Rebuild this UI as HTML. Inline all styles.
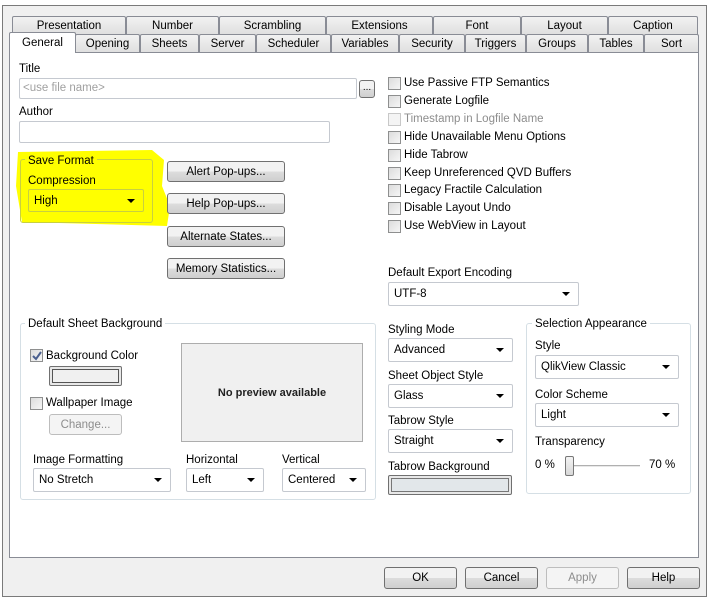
<!DOCTYPE html>
<html><head><style>
*{box-sizing:border-box;margin:0;padding:0}
body{width:718px;height:606px;position:relative;background:#fff;font-family:"Liberation Sans",sans-serif;font-size:11.5px;color:#000;overflow:hidden;line-height:16px}
.a{position:absolute;white-space:nowrap}
.win{position:absolute;left:2px;top:5px;width:705px;height:592px;background:#f0f0f0;border:1px solid #7a7a7a}
.tab{position:absolute;height:19px;border:1px solid #898c95;border-bottom:none;background:linear-gradient(#f2f2f2,#dedede);text-align:center;line-height:19px;border-radius:2px 2px 0 0}
.page{position:absolute;left:9px;top:52px;width:690px;height:506px;background:#fff;border:1px solid #898c95}
.inp{position:absolute;border:1px solid #c5c9d0;background:#fff;border-radius:2px}
.dd{position:absolute;border:1px solid #c5c9d0;background:#fff;border-radius:2px;padding-left:5px;line-height:23px}
.dd:after{content:"";position:absolute;right:8px;top:9px;border-left:4px solid transparent;border-right:4px solid transparent;border-top:4px solid #000}
.btn{position:absolute;border:1px solid #707070;border-radius:3px;background:linear-gradient(#f2f2f2 50%,#dddddd 50%,#cfcfcf);text-align:center;line-height:20px}
.cb{position:absolute;width:13px;height:13px;border:1px solid #8e8f8f;background:linear-gradient(135deg,#dcdcdc,#f6f6f6)}
.grp{position:absolute;border:1px solid #d5dfe5;border-radius:3px}
.lg{position:absolute;background:#fff;padding:0 3px}
</style></head><body>
<div class="win"></div>
<div class="tab" style="left:12px;top:16px;width:114px">Presentation</div>
<div class="tab" style="left:126px;top:16px;width:93px">Number</div>
<div class="tab" style="left:219px;top:16px;width:107px">Scrambling</div>
<div class="tab" style="left:326px;top:16px;width:107px">Extensions</div>
<div class="tab" style="left:433px;top:16px;width:88px">Font</div>
<div class="tab" style="left:521px;top:16px;width:87px">Layout</div>
<div class="tab" style="left:608px;top:16px;width:90px">Caption</div>
<div class="tab" style="left:75px;top:34px;width:65px">Opening</div>
<div class="tab" style="left:140px;top:34px;width:59px">Sheets</div>
<div class="tab" style="left:199px;top:34px;width:57px">Server</div>
<div class="tab" style="left:256px;top:34px;width:75px">Scheduler</div>
<div class="tab" style="left:331px;top:34px;width:68px">Variables</div>
<div class="tab" style="left:399px;top:34px;width:66px">Security</div>
<div class="tab" style="left:465px;top:34px;width:61px">Triggers</div>
<div class="tab" style="left:526px;top:34px;width:62px">Groups</div>
<div class="tab" style="left:588px;top:34px;width:56px">Tables</div>
<div class="tab" style="left:644px;top:34px;width:55px">Sort</div>
<div class="page"></div>
<div class="tab" style="left:9px;top:32px;width:67px;height:21px;background:#fff;line-height:20px;z-index:2">General</div>

<div class="a" style="left:19px;top:61px">Title</div>
<div class="inp" style="left:19px;top:78px;width:338px;height:21px;color:#a0a0a0;padding-left:3px;line-height:19px">&lt;use file name&gt;</div>
<div class="btn" style="left:359px;top:80px;width:16px;height:18px;line-height:14px;font-size:10px">...</div>
<div class="a" style="left:19px;top:104px">Author</div>
<div class="inp" style="left:19px;top:121px;width:311px;height:22px"></div>

<svg class="a" style="left:12px;top:146px" width="160" height="84"><path d="M6 6 L140 4 L152 14 L150 40 L158 60 L155 80 L10 76 L4 40 Z" fill="#ffff00"/></svg>
<div class="grp" style="left:20px;top:159px;width:133px;height:64px;border-color:#c8d040"></div>
<div class="a" style="left:25px;top:153px;background:#ffff00;padding:0 3px">Save Format</div>
<div class="a" style="left:28px;top:173px">Compression</div>
<div class="dd" style="left:28px;top:189px;width:116px;height:23px;background:#ffff00;border-color:#c8d040;line-height:22px">High</div>

<div class="btn" style="left:167px;top:161px;width:118px;height:21px">Alert Pop-ups...</div>
<div class="btn" style="left:167px;top:193px;width:118px;height:21px">Help Pop-ups...</div>
<div class="btn" style="left:167px;top:226px;width:118px;height:21px">Alternate States...</div>
<div class="btn" style="left:167px;top:258px;width:118px;height:21px">Memory Statistics...</div>

<div class="cb" style="left:388px;top:77px"></div><div class="a" style="left:404px;top:75px">Use Passive FTP Semantics</div>
<div class="cb" style="left:388px;top:95px"></div><div class="a" style="left:404px;top:93px">Generate Logfile</div>
<div class="cb" style="left:388px;top:113px;border-color:#c8c8c8;background:#f4f4f4"></div><div class="a" style="left:404px;top:111px;color:#8d8d8d">Timestamp in Logfile Name</div>
<div class="cb" style="left:388px;top:131px"></div><div class="a" style="left:404px;top:129px">Hide Unavailable Menu Options</div>
<div class="cb" style="left:388px;top:149px"></div><div class="a" style="left:404px;top:147px">Hide Tabrow</div>
<div class="cb" style="left:388px;top:167px"></div><div class="a" style="left:404px;top:165px">Keep Unreferenced QVD Buffers</div>
<div class="cb" style="left:388px;top:184px"></div><div class="a" style="left:404px;top:182px">Legacy Fractile Calculation</div>
<div class="cb" style="left:388px;top:202px"></div><div class="a" style="left:404px;top:200px">Disable Layout Undo</div>
<div class="cb" style="left:388px;top:220px"></div><div class="a" style="left:404px;top:218px">Use WebView in Layout</div>

<div class="a" style="left:388px;top:265px">Default Export Encoding</div>
<div class="dd" style="left:388px;top:282px;width:191px;height:24px">UTF-8</div>

<div class="grp" style="left:20px;top:323px;width:356px;height:177px"></div>
<div class="lg" style="left:25px;top:316px">Default Sheet Background</div>
<div class="cb" style="left:30px;top:349px"></div>
<svg class="a" style="left:31px;top:350px" width="12" height="12"><path d="M2 6 L5 9 L10 2" stroke="#4a5f8f" stroke-width="2" fill="none"/></svg>
<div class="a" style="left:46px;top:348px">Background Color</div>
<div class="a" style="left:49px;top:366px;width:73px;height:20px;border:1px solid #707070;border-radius:2px;background:#e8e8e8;padding:2px"><div style="width:100%;height:100%;border:1px solid #555;background:#f0f0f0"></div></div>
<div class="cb" style="left:30px;top:397px"></div>
<div class="a" style="left:46px;top:395px">Wallpaper Image</div>
<div class="btn" style="left:49px;top:414px;width:73px;height:21px;color:#8d8d8d;border-color:#bdbdbd;background:#f4f4f4">Change...</div>
<div class="a" style="left:181px;top:343px;width:182px;height:99px;background:#f0f0f0;border:1px solid #adadad;text-align:center;line-height:99px;font-weight:bold;font-size:11px;color:#222">No preview available</div>
<div class="a" style="left:33px;top:452px">Image Formatting</div>
<div class="a" style="left:186px;top:452px">Horizontal</div>
<div class="a" style="left:282px;top:452px">Vertical</div>
<div class="dd" style="left:33px;top:468px;width:138px;height:24px">No Stretch</div>
<div class="dd" style="left:186px;top:468px;width:78px;height:24px">Left</div>
<div class="dd" style="left:282px;top:468px;width:84px;height:24px">Centered</div>

<div class="a" style="left:388px;top:322px">Styling Mode</div>
<div class="dd" style="left:388px;top:338px;width:125px;height:24px">Advanced</div>
<div class="a" style="left:388px;top:368px">Sheet Object Style</div>
<div class="dd" style="left:388px;top:384px;width:125px;height:24px">Glass</div>
<div class="a" style="left:388px;top:413px">Tabrow Style</div>
<div class="dd" style="left:388px;top:429px;width:125px;height:24px">Straight</div>
<div class="a" style="left:388px;top:459px">Tabrow Background</div>
<div class="a" style="left:388px;top:475px;width:124px;height:20px;border:1px solid #707070;border-radius:2px;background:#e8e8e8;padding:2px"><div style="width:100%;height:100%;border:1px solid #777;background:#e2e7ea"></div></div>

<div class="grp" style="left:526px;top:323px;width:165px;height:171px"></div>
<div class="lg" style="left:532px;top:316px">Selection Appearance</div>
<div class="a" style="left:535px;top:338px">Style</div>
<div class="dd" style="left:535px;top:355px;width:144px;height:24px">QlikView Classic</div>
<div class="a" style="left:535px;top:387px">Color Scheme</div>
<div class="dd" style="left:535px;top:403px;width:144px;height:24px">Light</div>
<div class="a" style="left:535px;top:434px">Transparency</div>
<div class="a" style="left:535px;top:457px">0 %</div>
<div class="a" style="left:568px;top:465px;width:72px;height:2px;border-top:1px solid #b0b0b0;border-bottom:1px solid #e8e8e8"></div>
<div class="a" style="left:565px;top:456px;width:9px;height:20px;border:1px solid #777;border-radius:2px;background:linear-gradient(#f4f4f4,#d8d8d8)"></div>
<div class="a" style="left:649px;top:457px">70 %</div>

<div class="btn" style="left:384px;top:567px;width:73px;height:22px">OK</div>
<div class="btn" style="left:465px;top:567px;width:73px;height:22px">Cancel</div>
<div class="btn" style="left:546px;top:567px;width:73px;height:22px;color:#8d8d8d;border-color:#bdbdbd;background:#f4f4f4">Apply</div>
<div class="btn" style="left:627px;top:567px;width:73px;height:22px">Help</div>
</body></html>
